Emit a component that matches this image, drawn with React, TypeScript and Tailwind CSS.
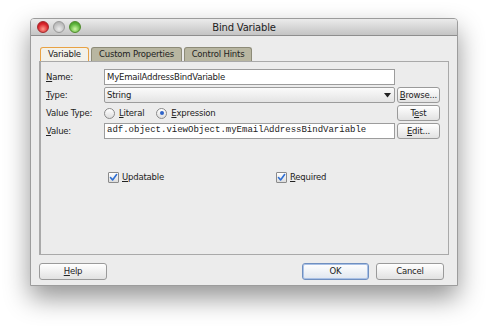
import React from "react";

const font = { fontFamily: '"DejaVu Sans", "Liberation Sans", sans-serif', letterSpacing: "-0.2px" };

function Btn({ children, className = "", def = false }: { children: React.ReactNode; className?: string; def?: boolean }) {
  return (
    <div
      className={
        "flex items-center justify-center rounded-[3px] border text-[8.5px] text-[#222] " +
        (def
          ? "border-[#6f8fc0] bg-gradient-to-b from-[#ffffff] to-[#dfe6ef] shadow-[inset_0_0_0_1px_#a9c1e6] "
          : "border-[#9a9a9a] bg-gradient-to-b from-[#ffffff] to-[#e2e2e2] ") +
        className
      }
    >
      {children}
    </div>
  );
}

function U({ c }: { c: string }) {
  return <span className="underline underline-offset-[1px]">{c}</span>;
}

function Check() {
  return (
    <div className="flex h-[11px] w-[11px] items-center justify-center rounded-[1px] border border-[#8a8a8a] bg-gradient-to-b from-white to-[#dcdcdc]">
      <svg width="9" height="9" viewBox="0 0 9 9">
        <path d="M1.5 4.5 L3.6 7 L7.6 1.5" stroke="#2f6fd3" strokeWidth="1.6" fill="none" strokeLinecap="round" strokeLinejoin="round" />
      </svg>
    </div>
  );
}

function Radio({ on = false }: { on?: boolean }) {
  return (
    <div className="flex h-[11px] w-[11px] items-center justify-center rounded-full border border-[#8a8a8a] bg-gradient-to-b from-white to-[#dedede]">
      {on && <div className="h-[4px] w-[4px] rounded-full bg-[#2d63c8]" />}
    </div>
  );
}

export default function App() {
  return (
    <div className="h-[329px] w-[489px] bg-white pl-[30px] pt-[18px]" style={font}>
      <div className="flex h-[268px] w-[428px] flex-col overflow-hidden rounded-t-[4px] border border-[#9c9c9c] bg-[#ececec] shadow-[0_12px_26px_rgba(0,0,0,0.42)]">
        {/* title bar */}
        <div className="relative flex h-[17px] items-center border-b border-[#8e8e8e] bg-gradient-to-b from-[#ebebeb] to-[#c4c4c4]">
          <div className="flex items-center gap-[4px] pl-[6px]">
            <div className="h-[12px] w-[12px] rounded-full border border-[#a2282b] bg-[radial-gradient(circle_at_50%_70%,#ff9a8c,#d8232a_60%,#b5141a)]" />
            <div className="h-[12px] w-[12px] rounded-full border border-[#9a9a9a] bg-[radial-gradient(circle_at_50%_70%,#ececec,#c0c0c0_60%,#a8a8a8)]" />
            <div className="h-[12px] w-[12px] rounded-full border border-[#4f8a2c] bg-[radial-gradient(circle_at_50%_70%,#cef7a4,#5bb33a_60%,#3f8e22)]" />
          </div>
          <div className="absolute inset-0 flex items-center justify-center text-[10px] text-[#222]">Bind Variable</div>
        </div>

        {/* body */}
        <div className="flex flex-1 flex-col px-[8px] pt-[11px]">
          {/* tabs */}
          <div className="flex h-[14px] items-end gap-[2px] pl-[1px] text-[8.5px] text-[#222]">
            <div className="flex h-[14px] w-[49px] items-center justify-center rounded-t-[3px] border border-b-0 border-[#e8a245] bg-[#f3f1e9]">Variable</div>
            <div className="flex h-[14px] w-[91px] items-center justify-center rounded-t-[3px] border border-b-0 border-[#8d8b78] bg-[#b8b6a1]">Custom Properties</div>
            <div className="flex h-[14px] w-[68px] items-center justify-center rounded-t-[3px] border border-b-0 border-[#8d8b78] bg-[#b8b6a1]">Control Hints</div>
          </div>
          {/* panel */}
          <div className="flex h-[194px] flex-col border border-l-2 border-[#a9a9a9] bg-[#ececec] pl-[5px] pr-[10px] pt-[7px] text-[8.5px] text-[#222]">
            <div className="grid grid-cols-[58px_291px_2px_43px] grid-rows-[16px_16px_16px_16px] gap-y-[2px] items-center">
              <div><U c="N" />ame:</div>
              <div className="flex h-[16px] items-center border border-[#9c9c9c] bg-white pl-[2px]">MyEmailAddressBindVariable</div>
              <div />
              <div />

              <div><U c="T" />ype:</div>
              <div className="flex h-[16px] items-center justify-between rounded-[2px] border border-[#9c9c9c] bg-gradient-to-b from-[#fbfbfb] to-[#e4e4e4] pl-[2px] pr-[3px]">
                <span>String</span>
                <svg width="7" height="5" viewBox="0 0 7 5"><path d="M0 0 H7 L3.5 4.5 Z" fill="#222" /></svg>
              </div>
              <div />
              <Btn className="h-[16px]"><span><U c="B" />rowse...</span></Btn>

              <div>Value Type:</div>
              <div className="flex items-center">
                <Radio />
                <span className="ml-[4px]"><U c="L" />iteral</span>
                <div className="ml-[12px]"><Radio on /></div>
                <span className="ml-[4px]"><U c="E" />xpression</span>
              </div>
              <div />
              <Btn className="h-[16px]"><span>T<U c="e" />st</span></Btn>

              <div><U c="V" />alue:</div>
              <div className="flex h-[16px] items-center border border-[#9c9c9c] bg-white pl-[2px] text-[9px]" style={{ fontFamily: '"Liberation Mono", monospace', letterSpacing: "0px" }}>
                adf.object.viewObject.myEmailAddressBindVariable
              </div>
              <div />
              <Btn className="h-[16px]"><span><U c="E" />dit...</span></Btn>
            </div>

            <div className="mt-[32px] flex items-center">
              <div className="ml-[62px] flex w-[168px] items-center">
                <Check />
                <span className="ml-[3px]"><U c="U" />pdatable</span>
              </div>
              <div className="flex items-center">
                <Check />
                <span className="ml-[3px]"><U c="R" />equired</span>
              </div>
            </div>
          </div>

          {/* buttons */}
          <div className="mt-[8px] flex items-center">
            <Btn className="h-[17px] w-[68px]"><span><U c="H" />elp</span></Btn>
            <div className="flex-1" />
            <Btn def className="h-[17px] w-[67px]">OK</Btn>
            <Btn className="ml-[7px] h-[17px] w-[68px]">Cancel</Btn>
            <div className="w-[5px]" />
          </div>
        </div>
      </div>
    </div>
  );
}
